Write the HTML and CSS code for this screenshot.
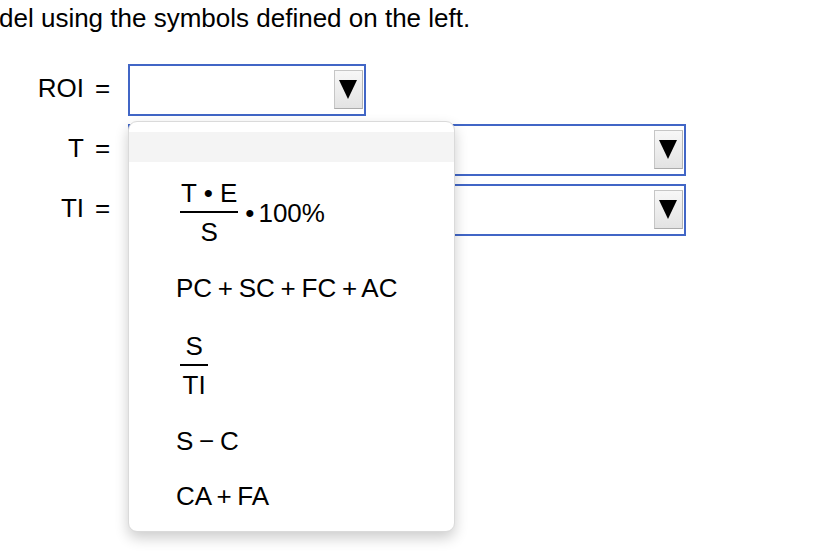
FILE: index.html
```html
<!DOCTYPE html>
<html lang="en">
<head>
<meta charset="utf-8">
<title>Model</title>
<link rel="stylesheet" href="styles.css">
</head>
<body>
<p class="prompt">del using the symbols defined on the left.</p>
<div class="rows">
  <div class="row">
    <span class="lbl">ROI</span><span class="eq">=</span>
    <div class="select select-short">
      <span class="btn"><svg class="tri" viewBox="0 0 18 19" width="18" height="19"><polygon points="0,0 18,0 9,19" fill="#000"/></svg></span>
    </div>
  </div>
  <div class="row">
    <span class="lbl">T</span><span class="eq">=</span>
    <div class="select select-long">
      <span class="btn"><svg class="tri" viewBox="0 0 18 19" width="18" height="19"><polygon points="0,0 18,0 9,19" fill="#000"/></svg></span>
    </div>
  </div>
  <div class="row">
    <span class="lbl">TI</span><span class="eq">=</span>
    <div class="select select-long">
      <span class="btn"><svg class="tri" viewBox="0 0 18 19" width="18" height="19"><polygon points="0,0 18,0 9,19" fill="#000"/></svg></span>
    </div>
  </div>
</div>

<div class="popup">
  <div class="opt opt-empty"></div>
  <div class="opt opt-frac">
    <span class="frac"><span class="num">T • E</span><span class="bar"></span><span class="den">S</span></span><span class="dot">•</span><span class="pct">100%</span>
  </div>
  <div class="opt opt-text">PC + SC + FC + AC</div>
  <div class="opt opt-frac">
    <span class="frac frac-sm"><span class="num">S</span><span class="bar"></span><span class="den">TI</span></span>
  </div>
  <div class="opt opt-text">S − C</div>
  <div class="opt opt-text">CA + FA</div>
</div>
</body>
</html>
```
FILE: styles.css
```css
html, body {
  margin: 0;
  padding: 0;
  background: #fff;
}
body {
  font-family: "Liberation Sans", Arial, Helvetica, sans-serif;
  font-size: 26px;
  color: #000;
  width: 816px;
  height: 560px;
  overflow: hidden;
  position: relative;
}
.prompt {
  margin: 3px 0 0 -1px;
  line-height: 30px;
  white-space: nowrap;
}
.rows {
  margin-top: 31px;
  display: flex;
  flex-direction: column;
  gap: 8px;
}
.row {
  display: flex;
  align-items: flex-start;
  height: 52px;
}
.lbl {
  width: 84px;
  text-align: right;
  line-height: 30px;
  padding-top: 9px;
}
.eq {
  width: 44px;
  box-sizing: border-box;
  padding-left: 11px;
  line-height: 30px;
  padding-top: 9px;
}
.select {
  box-sizing: border-box;
  height: 52px;
  border: 2px solid #4166c6;
  background: #fff;
  display: flex;
  justify-content: flex-end;
  align-items: flex-start;
  padding: 4px 1px 0 0;
}
.select-short { width: 238px; }
.select-long { width: 558px; }
.btn {
  box-sizing: border-box;
  width: 29px;
  height: 39px;
  border: 1px solid #c6c6c6;
  border-bottom-color: #ababab;
  border-right-color: #b5b5b5;
  background: linear-gradient(#f7f7f7, #e3e3e3);
  display: flex;
  align-items: center;
  justify-content: center;
}
.tri { display: block; margin-right: 2px; }

.popup {
  position: absolute;
  left: 128px;
  top: 121px;
  width: 327px;
  box-sizing: border-box;
  background: #fff;
  border: 1px solid #dadada;
  border-radius: 9px;
  box-shadow: 0 6px 14px rgba(0, 0, 0, 0.2);
  padding: 10px 0 8px;
}
.opt {
  padding: 13px 0 12px 47px;
  line-height: 30px;
  white-space: nowrap;
}
.opt-empty {
  padding: 0;
  height: 30px;
  background: #f4f4f4;
}
.opt-text { word-spacing: -1.5px; }
.opt-frac {
  display: flex;
  align-items: center;
  padding: 17px 0 14px 47px;
  line-height: 30px;
}
.frac {
  display: inline-flex;
  flex-direction: column;
  align-items: center;
  margin-left: 4px;
}
.num, .den {
  line-height: 28px;
  padding: 0 1px;
}
.frac-sm .num, .frac-sm .den { padding: 0 2.5px; }
.bar {
  align-self: stretch;
  height: 2px;
  background: #000;
  margin: 4px 0 5px;
}
.dot { margin-left: 7px; }
.pct { margin-left: 4px; }
```
